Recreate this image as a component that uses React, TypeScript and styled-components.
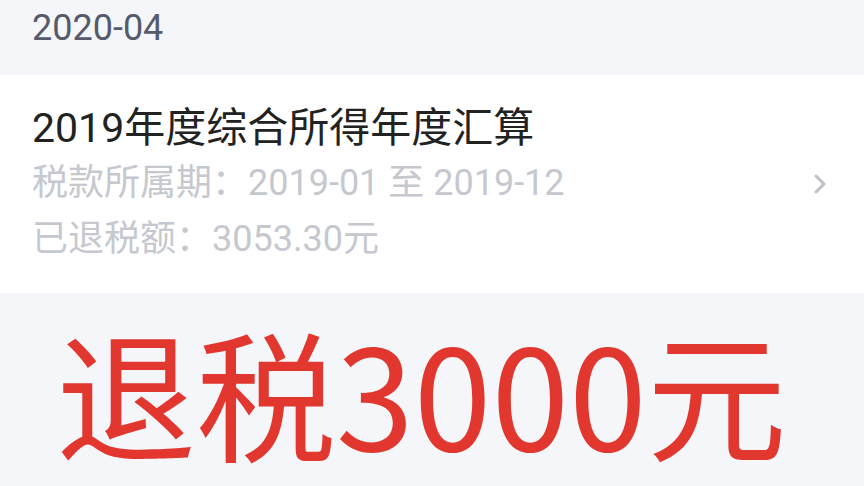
import styled, { createGlobalStyle } from 'styled-components';

const GlobalStyle = createGlobalStyle`
  html, body {
    margin: 0;
    padding: 0;
    background: #f5f6fa;
  }
  body {
    font-family: Roboto, "Noto Sans CJK SC", sans-serif;
  }
`;

export default function App() {
  return (
    <>
      <GlobalStyle />
      <Page>
        <MonthHeader>2020-04</MonthHeader>
        <RecordCard>
          <RecordBody>
            <RecordTitle>2019年度综合所得年度汇算</RecordTitle>
            <RecordMeta>税款所属期：2019-01 至 2019-12</RecordMeta>
            <RecordMeta>已退税额：3053.30元</RecordMeta>
          </RecordBody>
          <Chevron viewBox="0 0 12 20" aria-hidden="true">
            <polyline points="2,2 10,10 2,18" />
          </Chevron>
        </RecordCard>
        <Caption>退税3000元</Caption>
      </Page>
    </>
  );
}

const Page = styled.div`
  display: flex;
  flex-direction: column;
  min-height: 486px;
  background: #f5f6fa;
  overflow: hidden;
`;

const MonthHeader = styled.div`
  box-sizing: border-box;
  height: 75px;
  padding: 8px 32px 0;
  font-size: 36px;
  line-height: 40px;
  color: #565b6c;
`;

const RecordCard = styled.div`
  display: flex;
  align-items: center;
  background: #ffffff;
  padding: 26px 38px 26px 32px;
`;

const RecordBody = styled.div`
  flex: 1;
  display: flex;
  flex-direction: column;
`;

const RecordTitle = styled.div`
  font-size: 41px;
  line-height: 54px;
  color: #222222;
  white-space: nowrap;
`;

const RecordMeta = styled.div`
  font-size: 36px;
  line-height: 56px;
  color: #c6c8d0;
  white-space: nowrap;
`;

const Chevron = styled.svg`
  width: 12px;
  height: 20px;
  fill: none;
  stroke: #bfc1c8;
  stroke-width: 3;
  stroke-linecap: round;
  stroke-linejoin: round;
`;

const Caption = styled.div`
  margin-top: 22px;
  padding-left: 56px;
  font-family: "Noto Sans CJK SC", sans-serif;
  font-size: 140px;
  line-height: 150px;
  color: #e2372e;
  white-space: nowrap;
`;
